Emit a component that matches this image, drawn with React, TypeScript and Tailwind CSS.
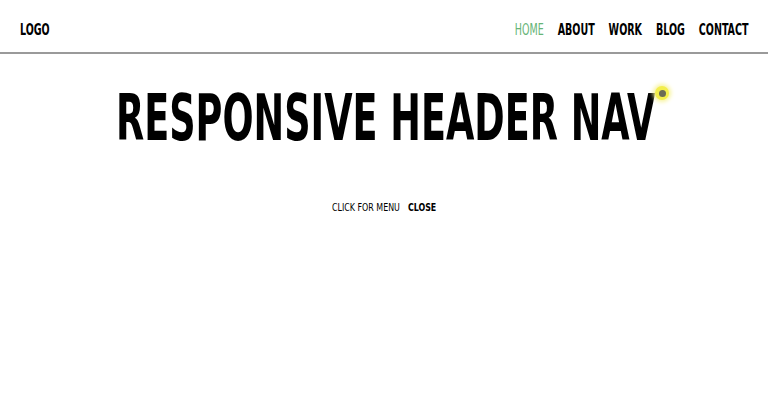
const navLinks = ["HOME", "ABOUT", "WORK", "BLOG", "CONTACT"];

const font = {
  fontFamily: '"DejaVu Sans Condensed", "DejaVu Sans", sans-serif',
};

export default function App() {
  return (
    <div className="min-h-screen bg-white text-black" style={font}>
      <header className="flex h-[54px] items-center justify-between border-b-2 border-[#9a9a9a] px-5 pt-[7px]">
        <a className="origin-left scale-x-[0.66] text-[16px] font-bold">LOGO</a>
        <nav className="flex origin-right scale-x-[0.663] items-center gap-[21px]">
          {navLinks.map((link, i) => (
            <a
              key={link}
              className={`text-[16px] ${i === 0 ? "font-normal text-[#66b477]" : "font-bold"}`}
            >
              {link}
            </a>
          ))}
        </nav>
      </header>

      <main className="flex flex-col items-center">
        <div className="relative mt-[32px] w-[536px]">
          <h1 className="origin-left scale-x-[0.636] whitespace-nowrap text-[64px] font-bold leading-none">
            RESPONSIVE HEADER NAV
          </h1>
          {/* pointer highlight */}
          <span className="absolute -right-[17px] top-0 flex h-[14px] w-[14px] items-center justify-center rounded-full bg-[#f3ee4c] shadow-[0_0_4px_2px_#f7f39a]">
            <span className="h-[7px] w-[7px] rounded-full bg-[#6b6b55]" />
          </span>
        </div>

        <div className="mt-[52px] flex scale-x-[0.8] items-center gap-[10px] text-[11px] leading-none">
          <span>CLICK FOR MENU</span>
          <button className="font-bold">CLOSE</button>
        </div>
      </main>
    </div>
  );
}
